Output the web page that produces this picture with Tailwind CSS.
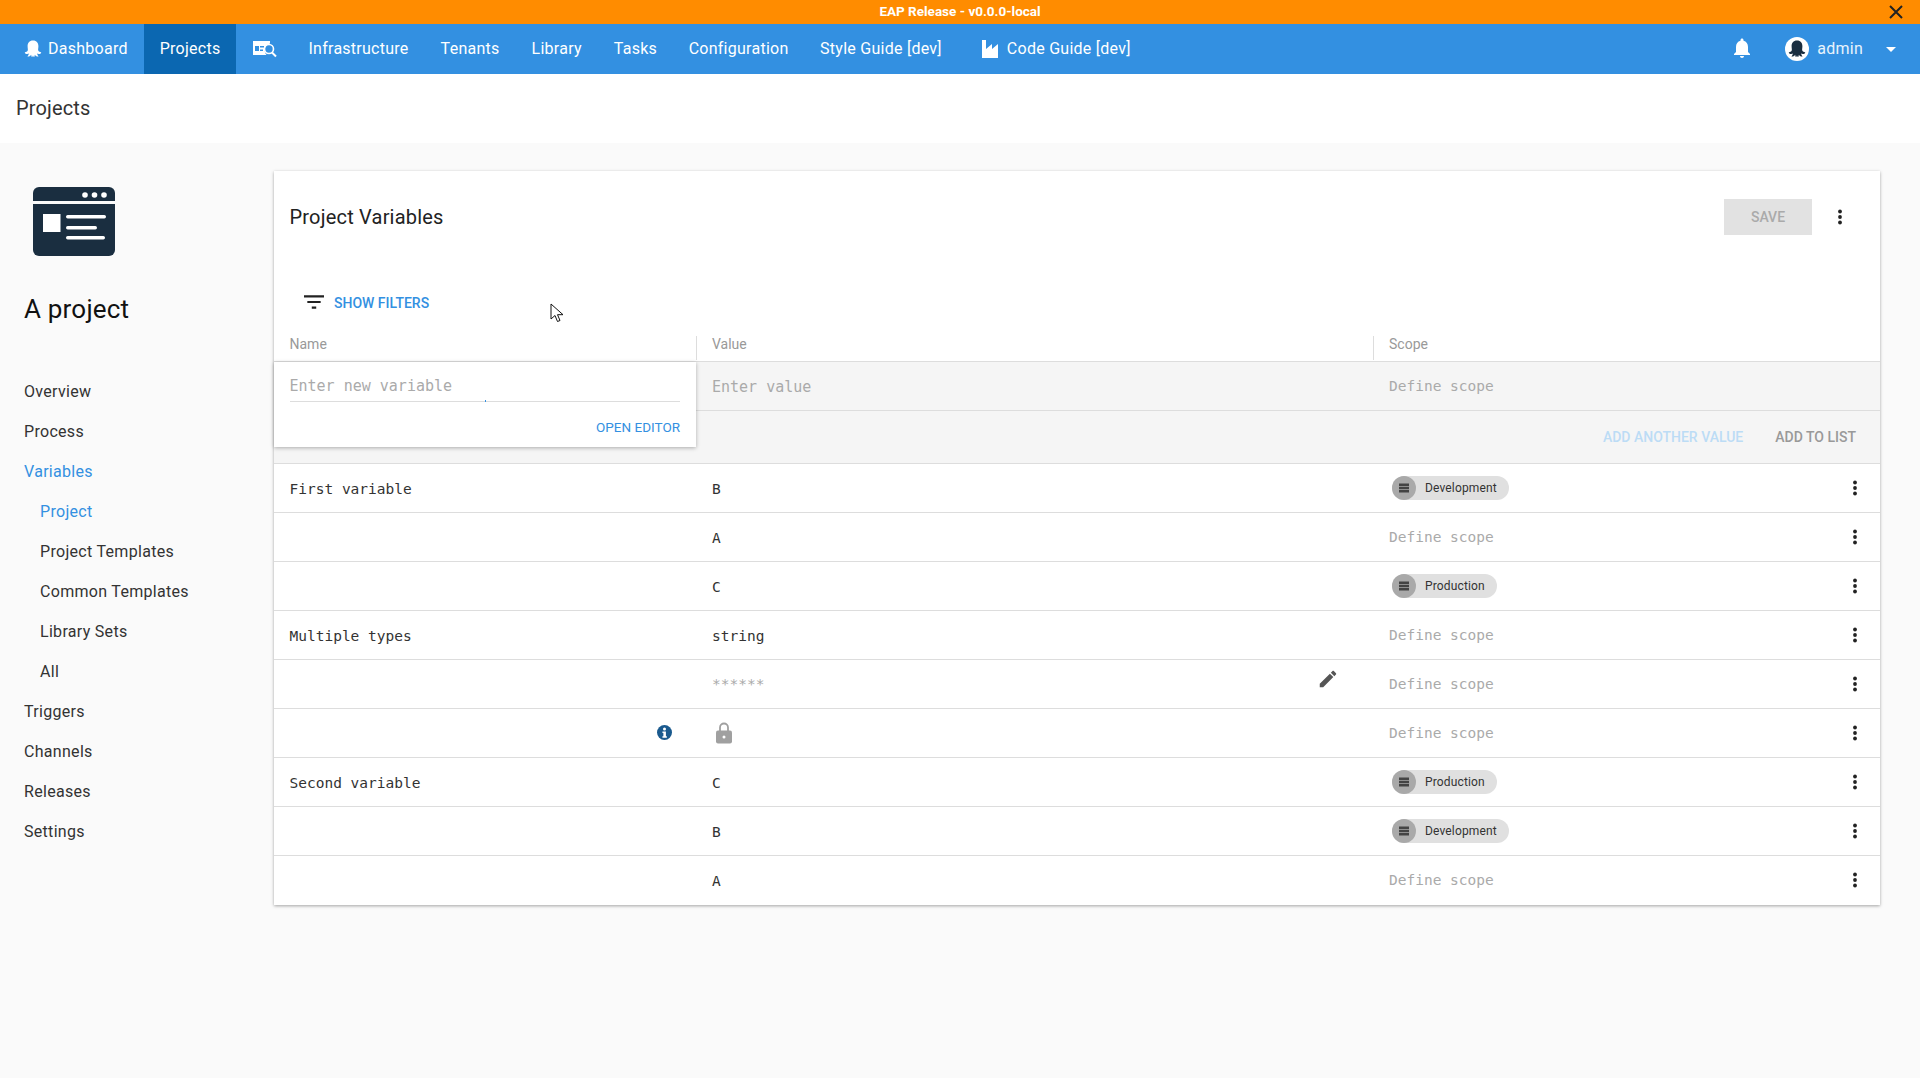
<!DOCTYPE html>
<html lang="en">
<head>
  <meta charset="UTF-8" />
  <title>Project Variables</title>
  <script src="https://cdn.jsdelivr.net/npm/@tailwindcss/browser@4"></script>
</head>
<body class="bg-[#fafafa] font-['Roboto',sans-serif] text-[#333] h-[1078px] overflow-hidden relative">

  <!-- banner -->
  <div class="h-6 bg-[#ff8c00] relative flex items-center justify-center pb-[1px] text-white text-[13.5px] font-bold">
    EAP Release - v0.0.0-local
    <svg class="absolute right-[17px] top-[5px] w-[14px] h-[14px]" viewBox="0 0 14 14"><path d="M1 1l12 12M13 1L1 13" stroke="#222" stroke-width="2" fill="none"/></svg>
  </div>

  <!-- nav -->
  <nav class="h-[50px] bg-[#3390e1] text-white text-base tracking-[0.26px] flex items-stretch">
    <a class="flex items-center pl-6 pr-4 gap-[6px]">
      <svg class="w-[18px] h-[18px]" viewBox="0 0 24 24" fill="#fff"><path d="M12 .5C7 .5 4.800 4 4.800 8c0 3 .7 4.500.2 6-.5 1.500-2.500 2-4 2.500.5 2 3.500 2.500 5.500 1.500-.3 1.800-1.200 3-2 4 2.200.5 4.200-1 5-2.500.3 1.200.5 2 .8 3 1.500-.2 1.700-1.500 1.700-3 0 1.500.2 2.800 1.700 3 .3-1 .5-1.800.8-3 .8 1.500 2.800 3 5 2.500-.8-1-1.700-2.200-2-4 2 1 5 .5 5.500-1.500-1.500-.5-3.500-1-4-2.500-.5-1.500.2-3 .2-6 0-4-2.200-7.500-7.200-7.500z"/></svg>
      Dashboard
    </a>
    <a class="flex items-center px-4 bg-[#0b67b1]">Projects</a>
    <a class="flex items-center pl-[17px] pr-[15px]">
      <svg class="w-[24px] h-[18px]" viewBox="0 0 24 18" fill="#fff"><path d="M0 1h17v2.500a7 7 0 0 0-3.500 11.500H0z"/><rect x="2" y="6" width="4" height="5" fill="#3390e1"/><rect x="7" y="6" width="4" height="1.500" fill="#3390e1"/><rect x="7" y="9.500" width="3" height="1.500" fill="#3390e1"/><circle cx="16" cy="9" r="4.500" fill="none" stroke="#fff" stroke-width="1.600"/><path d="M19 12.500l4 4" stroke="#fff" stroke-width="2"/></svg>
    </a>
    <a class="flex items-center px-4">Infrastructure</a>
    <a class="flex items-center px-4">Tenants</a>
    <a class="flex items-center px-4">Library</a>
    <a class="flex items-center px-4">Tasks</a>
    <a class="flex items-center pl-[15.500px] pr-4">Configuration</a>
    <a class="flex items-center pl-[15.500px] pr-4">Style Guide [dev]</a>
    <a class="flex items-center ml-[8px] px-4 gap-[7px]">
      <svg class="w-[18px] h-[18px]" viewBox="0 0 18 18" fill="#fff"><path d="M0 0h4v9l6-5v5l6-5v14H0z"/></svg>
      Code Guide [dev]
    </a>
    <div class="ml-auto flex items-center">
      <svg class="w-[24px] h-[24px] mr-[31px] -mt-[2px]" viewBox="0 0 24 24" fill="#fff"><path d="M12 22c1.100 0 2-.9 2-2h-4c0 1.100.9 2 2 2zm6-6v-5c0-3.100-1.600-5.600-4.500-6.300V4c0-.8-.7-1.500-1.500-1.500s-1.500.7-1.500 1.500v.7C7.600 5.400 6 7.900 6 11v5l-2 2v1h16v-1z"/></svg>
      <span class="w-6 h-6 rounded-full bg-white flex items-center justify-center">
        <svg class="w-[18px] h-[18px]" viewBox="0 0 24 24" fill="#1a2e40"><path d="M12 .5C7 .5 4.800 4 4.800 8c0 3 .7 4.500.2 6-.5 1.500-2.500 2-4 2.500.5 2 3.500 2.500 5.500 1.500-.3 1.800-1.200 3-2 4 2.200.5 4.200-1 5-2.500.3 1.200.5 2 .8 3 1.500-.2 1.700-1.500 1.700-3 0 1.500.2 2.800 1.700 3 .3-1 .5-1.800.8-3 .8 1.500 2.800 3 5 2.500-.8-1-1.700-2.200-2-4 2 1 5 .5 5.500-1.500-1.500-.5-3.500-1-4-2.500-.5-1.500.2-3 .2-6 0-4-2.200-7.500-7.200-7.500z"/></svg>
      </span>
      <span class="ml-[8px] text-[#e8f3fc]">admin</span>
      <svg class="w-[10px] h-[5px] ml-[23px] mr-[24px]" viewBox="0 0 10 5" fill="#fff"><path d="M0 0h10L5 5z"/></svg>
    </div>
  </nav>

  <!-- page title -->
  <header class="h-[69px] bg-white flex items-center pl-4 pb-[2px] text-xl tracking-[0.15px]">Projects</header>

  <div class="flex items-start">
    <!-- sidebar -->
    <aside class="w-[274px] shrink-0 pl-6">
      <svg class="mt-[44px] ml-[9px] w-[82px] h-[69px]" viewBox="0 0 82 69">
        <path d="M6 0h70a6 6 0 0 1 6 6v8H0V6a6 6 0 0 1 6-6z" fill="#1a2e40"/>
        <path d="M0 17h82v46a6 6 0 0 1-6 6H6a6 6 0 0 1-6-6z" fill="#1a2e40"/>
        <circle cx="52" cy="8" r="2.800" fill="#fff"/><circle cx="61.500" cy="8" r="2.800" fill="#fff"/><circle cx="71" cy="8" r="2.800" fill="#fff"/>
        <rect x="10" y="27" width="17.500" height="18" fill="#fff"/>
        <rect x="33" y="28" width="40" height="3.500" rx="1.700" fill="#fff"/>
        <rect x="33" y="39" width="31" height="3.500" rx="1.700" fill="#fff"/>
        <rect x="33" y="49" width="39" height="3.500" rx="1.700" fill="#fff"/>
      </svg>
      <h1 class="mt-[34px] text-[26px] leading-[38px] tracking-[0.2px] text-[#111]">A project</h1>
      <ul class="mt-[44px] text-base leading-10 tracking-[0.3px]">
        <li>Overview</li>
        <li>Process</li>
        <li class="text-[#3390e1]">Variables</li>
        <li class="pl-4 text-[#3390e1]">Project</li>
        <li class="pl-4">Project Templates</li>
        <li class="pl-4">Common Templates</li>
        <li class="pl-4">Library Sets</li>
        <li class="pl-4">All</li>
        <li>Triggers</li>
        <li>Channels</li>
        <li>Releases</li>
        <li>Settings</li>
      </ul>
    </aside>

    <!-- card -->
    <main class="w-[1606px] mt-[28px] bg-white shadow-[0_1px_3px_rgba(0,0,0,0.35)] relative">
      <div class="h-[92px] flex items-center justify-between pl-[15.500px] pr-[30px]">
        <h2 class="text-xl tracking-[0.2px] text-[#222]">Project Variables</h2>
        <div class="flex items-center">
          <button class="w-[88px] h-9 bg-[#e2e2e2] text-[#aaa] text-sm font-medium">SAVE</button>
          <svg class="w-[20px] h-[20px] ml-[18px]" viewBox="0 0 20 20" fill="#222"><circle cx="10" cy="4.500" r="1.900"/><circle cx="10" cy="10" r="1.900"/><circle cx="10" cy="15.500" r="1.900"/></svg>
        </div>
      </div>

      <div class="h-[67px] pt-[30px] pl-[30px] flex items-start gap-[10px]">
        <svg class="w-[20px] h-[20px] -mt-[1px]" viewBox="3 3 18 18" fill="#222"><path d="M10 18h4v-2h-4v2zM3 6v2h18V6H3zm3 7h12v-2H6v2z"/></svg>
        <span class="text-sm font-medium text-[#3390e1]">SHOW FILTERS</span>
      </div>

      <!-- column headers -->
      <div class="grid grid-cols-[422px_677px_1fr] h-[32px] border-b border-[#ddd] text-sm text-[#999]">
        <div class="pl-[15.500px] pb-[4px] flex items-center">Name</div>
        <div class="pl-4 pb-[4px] flex items-center"><span class="absolute left-[422px] top-[165px] h-6 w-px bg-[#ddd]"></span>Value</div>
        <div class="pl-4 pb-[4px] flex items-center"><span class="absolute left-[1099px] top-[165px] h-6 w-px bg-[#ddd]"></span>Scope</div>
      </div>

      <!-- new variable row -->
      <div class="bg-[#f5f5f5] font-['DejaVu_Sans_Mono',monospace] text-[14.500px] text-[#aaa]">
        <div class="grid grid-cols-[422px_677px_1fr] h-[49px] border-b border-[#ddd] items-center">
          <div></div>
          <div class="pl-4 pt-[2px] text-[15px]">Enter value</div>
          <div class="pl-4 pt-[2px]">Define scope</div>
        </div>
        <div class="h-[53px] border-b border-[#ddd] flex items-center justify-end pr-[24px] gap-8 font-['Roboto',sans-serif] text-sm font-medium">
          <span class="text-[#bcdcf5]">ADD ANOTHER VALUE</span>
          <span class="text-[#999]">ADD TO LIST</span>
        </div>
      </div>

      <!-- editor popup lies over the row -->
      <div class="absolute left-0 top-[191px] w-[422px] h-[85px] bg-white shadow-[0_1px_4px_rgba(0,0,0,0.3)] pl-[15.500px] pr-4">
        <div class="h-[40px] border-b border-[#ddd] flex items-center pt-[9px] font-['DejaVu_Sans_Mono',monospace] text-[15px] text-[#aaa] relative">Enter new variable<span class="absolute left-[195px] bottom-[-1px] w-px h-[2px] bg-[#3390e1]"></span></div>
        <div class="text-right text-[13.500px] text-[#3390e1] mt-[15px]">OPEN EDITOR</div>
      </div>

      <!-- rows -->
      <div class="font-['DejaVu_Sans_Mono',monospace] text-[14.500px] text-[#333]">
        <div class="grid grid-cols-[422px_677px_1fr_50px] h-[49px] border-b border-[#ddd] items-center">
          <div class="pl-[15.500px] pt-1">First variable</div><div class="pl-4 pt-1">B</div>
          <div class="pl-[19px] flex"><span class="inline-flex items-center h-6 rounded-full bg-[#e0e0e0] pr-[12px] font-['Roboto',sans-serif] text-xs tracking-[0.15px]"><span class="w-6 h-6 rounded-full bg-[#a9a9a9] mr-[9px] flex items-center justify-center"><svg class="w-[12px] h-[12px]" viewBox="0 0 12 12" fill="#444"><path d="M1 1.500h10v2.500H1zM1 4.800h10v2.500H1zM1 8.100h10v2.500H1z"/></svg></span>Development</span></div>
          <svg class="w-5 h-5 justify-self-center" viewBox="0 0 20 20" fill="#222"><circle cx="10" cy="4.500" r="1.900"/><circle cx="10" cy="10" r="1.900"/><circle cx="10" cy="15.500" r="1.900"/></svg>
        </div>
        <div class="grid grid-cols-[422px_677px_1fr_50px] h-[49px] border-b border-[#ddd] items-center">
          <div></div><div class="pl-4 pt-1">A</div>
          <div class="pl-4 pt-[2px] text-[#aaa]">Define scope</div>
          <svg class="w-5 h-5 justify-self-center" viewBox="0 0 20 20" fill="#222"><circle cx="10" cy="4.500" r="1.900"/><circle cx="10" cy="10" r="1.900"/><circle cx="10" cy="15.500" r="1.900"/></svg>
        </div>
        <div class="grid grid-cols-[422px_677px_1fr_50px] h-[49px] border-b border-[#ddd] items-center">
          <div></div><div class="pl-4 pt-1">C</div>
          <div class="pl-[19px] flex"><span class="inline-flex items-center h-6 rounded-full bg-[#e0e0e0] pr-[12px] font-['Roboto',sans-serif] text-xs tracking-[0.15px]"><span class="w-6 h-6 rounded-full bg-[#a9a9a9] mr-[9px] flex items-center justify-center"><svg class="w-[12px] h-[12px]" viewBox="0 0 12 12" fill="#444"><path d="M1 1.500h10v2.500H1zM1 4.800h10v2.500H1zM1 8.100h10v2.500H1z"/></svg></span>Production</span></div>
          <svg class="w-5 h-5 justify-self-center" viewBox="0 0 20 20" fill="#222"><circle cx="10" cy="4.500" r="1.900"/><circle cx="10" cy="10" r="1.900"/><circle cx="10" cy="15.500" r="1.900"/></svg>
        </div>
        <div class="grid grid-cols-[422px_677px_1fr_50px] h-[49px] border-b border-[#ddd] items-center">
          <div class="pl-[15.500px] pt-1">Multiple types</div><div class="pl-4 pt-1">string</div>
          <div class="pl-4 pt-[2px] text-[#aaa]">Define scope</div>
          <svg class="w-5 h-5 justify-self-center" viewBox="0 0 20 20" fill="#222"><circle cx="10" cy="4.500" r="1.900"/><circle cx="10" cy="10" r="1.900"/><circle cx="10" cy="15.500" r="1.900"/></svg>
        </div>
        <div class="grid grid-cols-[422px_677px_1fr_50px] h-[49px] border-b border-[#ddd] items-center">
          <div></div>
          <div class="pl-4 pr-[34px] flex items-center justify-between text-[#aaa]"><span class="mt-[1px]">******</span><svg class="w-[22px] h-[22px] -mt-[11px]" viewBox="0 0 24 24" fill="#555"><path d="M3 17.250V21h3.750L17.810 9.940l-3.750-3.750L3 17.250zM20.710 7.040c.39-.39.39-1.020 0-1.410l-2.340-2.340c-.39-.39-1.020-.39-1.410 0l-1.830 1.830 3.750 3.750 1.830-1.830z"/></svg></div>
          <div class="pl-4 pt-[2px] text-[#aaa]">Define scope</div>
          <svg class="w-5 h-5 justify-self-center" viewBox="0 0 20 20" fill="#222"><circle cx="10" cy="4.500" r="1.900"/><circle cx="10" cy="10" r="1.900"/><circle cx="10" cy="15.500" r="1.900"/></svg>
        </div>
        <div class="grid grid-cols-[422px_677px_1fr_50px] h-[49px] border-b border-[#ddd] items-center">
          <div class="flex justify-end pr-[24px]"><svg class="w-[15px] h-[15px] -mt-[2px]" viewBox="0 0 16 16"><circle cx="8" cy="8" r="8" fill="#1a5a8e"/><circle cx="8" cy="4.200" r="1.600" fill="#fff"/><path d="M5.800 7h3.700v5h1v1.500H5.800V12h1V8.500h-1z" fill="#fff"/></svg></div>
          <div class="pl-4"><svg class="w-[20px] h-[24px] ml-[2px]" viewBox="0 0 20 24"><path d="M6 10V6.500a4 4 0 0 1 8 0V10" fill="none" stroke="#a0a0a0" stroke-width="1.800"/><rect x="2" y="9.500" width="16" height="13" rx="2" fill="#a0a0a0"/><circle cx="10" cy="16" r="1.500" fill="#fff"/></svg></div>
          <div class="pl-4 pt-[2px] text-[#aaa]">Define scope</div>
          <svg class="w-5 h-5 justify-self-center" viewBox="0 0 20 20" fill="#222"><circle cx="10" cy="4.500" r="1.900"/><circle cx="10" cy="10" r="1.900"/><circle cx="10" cy="15.500" r="1.900"/></svg>
        </div>
        <div class="grid grid-cols-[422px_677px_1fr_50px] h-[49px] border-b border-[#ddd] items-center">
          <div class="pl-[15.500px] pt-1">Second variable</div><div class="pl-4 pt-1">C</div>
          <div class="pl-[19px] flex"><span class="inline-flex items-center h-6 rounded-full bg-[#e0e0e0] pr-[12px] font-['Roboto',sans-serif] text-xs tracking-[0.15px]"><span class="w-6 h-6 rounded-full bg-[#a9a9a9] mr-[9px] flex items-center justify-center"><svg class="w-[12px] h-[12px]" viewBox="0 0 12 12" fill="#444"><path d="M1 1.500h10v2.500H1zM1 4.800h10v2.500H1zM1 8.100h10v2.500H1z"/></svg></span>Production</span></div>
          <svg class="w-5 h-5 justify-self-center" viewBox="0 0 20 20" fill="#222"><circle cx="10" cy="4.500" r="1.900"/><circle cx="10" cy="10" r="1.900"/><circle cx="10" cy="15.500" r="1.900"/></svg>
        </div>
        <div class="grid grid-cols-[422px_677px_1fr_50px] h-[49px] border-b border-[#ddd] items-center">
          <div></div><div class="pl-4 pt-1">B</div>
          <div class="pl-[19px] flex"><span class="inline-flex items-center h-6 rounded-full bg-[#e0e0e0] pr-[12px] font-['Roboto',sans-serif] text-xs tracking-[0.15px]"><span class="w-6 h-6 rounded-full bg-[#a9a9a9] mr-[9px] flex items-center justify-center"><svg class="w-[12px] h-[12px]" viewBox="0 0 12 12" fill="#444"><path d="M1 1.500h10v2.500H1zM1 4.800h10v2.500H1zM1 8.100h10v2.500H1z"/></svg></span>Development</span></div>
          <svg class="w-5 h-5 justify-self-center" viewBox="0 0 20 20" fill="#222"><circle cx="10" cy="4.500" r="1.900"/><circle cx="10" cy="10" r="1.900"/><circle cx="10" cy="15.500" r="1.900"/></svg>
        </div>
        <div class="grid grid-cols-[422px_677px_1fr_50px] h-[49px] items-center">
          <div></div><div class="pl-4 pt-[3px]">A</div>
          <div class="pl-4 pt-[1px] text-[#aaa]">Define scope</div>
          <svg class="w-5 h-5 justify-self-center -mt-[1px]" viewBox="0 0 20 20" fill="#222"><circle cx="10" cy="4.500" r="1.900"/><circle cx="10" cy="10" r="1.900"/><circle cx="10" cy="15.500" r="1.900"/></svg>
        </div>
      </div>
    </main>
  </div>

  <!-- mouse pointer from the capture -->
  <svg class="absolute left-[550px] top-[303px] w-[14px] h-[21px]" viewBox="0 0 14 21"><path d="M1 1v15l4-3.500 2.500 6 2.500-1-2.500-5.800H13z" fill="#fff" stroke="#111" stroke-width="1"/></svg>
</body>
</html>
